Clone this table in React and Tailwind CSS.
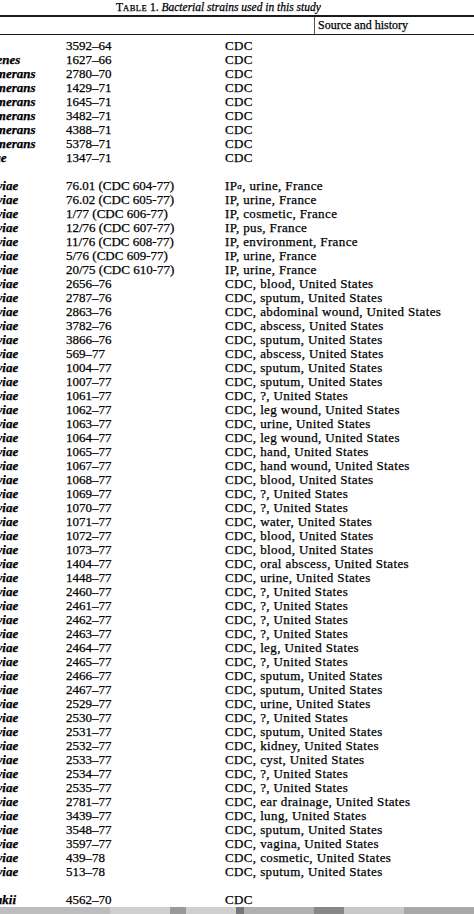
const CDC_US = (s) => `CDC, ${s}, United States`;

const gergoviae = [
  ["76.01 (CDC 604-77)", "IPA"],
  ["76.02 (CDC 605-77)", "IP, urine, France"],
  ["1/77 (CDC 606-77)", "IP, cosmetic, France"],
  ["12/76 (CDC 607-77)", "IP, pus, France"],
  ["11/76 (CDC 608-77)", "IP, environment, France"],
  ["5/76 (CDC 609-77)", "IP, urine, France"],
  ["20/75 (CDC 610-77)", "IP, urine, France"],
  ["2656–76", CDC_US("blood")],
  ["2787–76", CDC_US("sputum")],
  ["2863–76", CDC_US("abdominal wound")],
  ["3782–76", CDC_US("abscess")],
  ["3866–76", CDC_US("sputum")],
  ["569–77", CDC_US("abscess")],
  ["1004–77", CDC_US("sputum")],
  ["1007–77", CDC_US("sputum")],
  ["1061–77", CDC_US("?")],
  ["1062–77", CDC_US("leg wound")],
  ["1063–77", CDC_US("urine")],
  ["1064–77", CDC_US("leg wound")],
  ["1065–77", CDC_US("hand")],
  ["1067–77", CDC_US("hand wound")],
  ["1068–77", CDC_US("blood")],
  ["1069–77", CDC_US("?")],
  ["1070–77", CDC_US("?")],
  ["1071–77", CDC_US("water")],
  ["1072–77", CDC_US("blood")],
  ["1073–77", CDC_US("blood")],
  ["1404–77", CDC_US("oral abscess")],
  ["1448–77", CDC_US("urine")],
  ["2460–77", CDC_US("?")],
  ["2461–77", CDC_US("?")],
  ["2462–77", CDC_US("?")],
  ["2463–77", CDC_US("?")],
  ["2464–77", CDC_US("leg")],
  ["2465–77", CDC_US("?")],
  ["2466–77", CDC_US("sputum")],
  ["2467–77", CDC_US("sputum")],
  ["2529–77", CDC_US("urine")],
  ["2530–77", CDC_US("?")],
  ["2531–77", CDC_US("sputum")],
  ["2532–77", CDC_US("kidney")],
  ["2533–77", CDC_US("cyst")],
  ["2534–77", CDC_US("?")],
  ["2535–77", CDC_US("?")],
  ["2781–77", CDC_US("ear drainage")],
  ["3439–77", CDC_US("lung")],
  ["3548–77", CDC_US("sputum")],
  ["3597–77", CDC_US("vagina")],
  ["439–78", CDC_US("cosmetic")],
  ["513–78", CDC_US("sputum")],
].map(([strain, source]) => ["E. gergoviae", strain, source]);

const rows = [
  ["", "3592–64", "CDC"],
  ["E. aerogenes", "1627–66", "CDC"],
  ["E. agglomerans", "2780–70", "CDC"],
  ["E. agglomerans", "1429–71", "CDC"],
  ["E. agglomerans", "1645–71", "CDC"],
  ["E. agglomerans", "3482–71", "CDC"],
  ["E. agglomerans", "4388–71", "CDC"],
  ["E. agglomerans", "5378–71", "CDC"],
  ["E. cloacae", "1347–71", "CDC"],
  null,
  ...gergoviae,
  null,
  ["E. sakazakii", "4562–70", "CDC"],
];

function Source({ text }) {
  if (text === "IPA") {
    return (
      <>
        IP<sup className="text-[9px] italic relative -top-[1px]">a</sup>, urine, France
      </>
    );
  }
  return text;
}

function Row({ row }) {
  if (!row) return <div className="h-[14.02px]" />;
  const [species, strain, source] = row;
  return (
    <div className="flex h-[14.02px] items-center whitespace-nowrap leading-[14px]">
      <div className="w-[66px] shrink-0 overflow-hidden">
        <span className="-ml-[49px] block italic font-bold text-[13px]">{species}</span>
      </div>
      <div className="w-[159px] shrink-0 text-[13px]">{strain}</div>
      <div className="text-[13px] tracking-[0.38px]">
        <Source text={source} />
      </div>
    </div>
  );
}

export default function App() {
  return (
    <div className="w-full min-h-screen bg-white overflow-hidden font-['Liberation_Serif',serif] text-black [-webkit-text-stroke:0.25px_#000]">
      <div className="h-[15px] pl-[116px] leading-[15px] whitespace-nowrap text-[11.5px]">
        <span>T</span>
        <span className="text-[8.6px] tracking-[0.4px]">ABLE</span>
        <span> 1. </span>
        <span className="italic">Bacterial strains used in this study</span>
      </div>
      <div className="h-[1.5px] bg-[#1a1a1a]" />
      <div className="flex h-[17px]">
        <div className="w-[314px] shrink-0" />
        <div className="border-l border-[#555] pl-[3px] flex items-center text-[12px] whitespace-nowrap">
          Source and history
        </div>
      </div>
      <div className="h-[1.5px] bg-[#1a1a1a]" />
      <div className="pt-[3.5px]">
        {rows.map((row, i) => (
          <Row key={i} row={row} />
        ))}
      </div>
      <div className="flex h-[7px] bg-[#c4c4c4]">
        <div className="w-[110px] bg-[#bdbdbd]" />
        <div className="w-[60px] bg-[#d0d0d0]" />
        <div className="w-[16px] bg-[#9a9a9a]" />
        <div className="w-[50px] bg-[#cfcfcf]" />
        <div className="w-[8px] bg-[#777]" />
        <div className="w-[70px] bg-[#b0b0b0]" />
        <div className="w-[30px] bg-[#888]" />
        <div className="w-[60px] bg-[#c8c8c8]" />
        <div className="flex-1 bg-[#a8a8a8]" />
      </div>
    </div>
  );
}
